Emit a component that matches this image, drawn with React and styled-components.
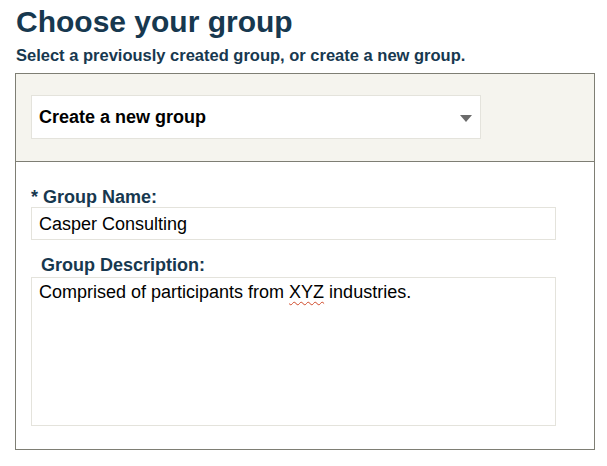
import React from "react";
import styled, { createGlobalStyle } from "styled-components";

const GlobalStyle = createGlobalStyle`
  body {
    margin: 0;
    background: #fff;
    font-family: "Liberation Sans", Arial, sans-serif;
  }
`;

const Page = styled.div`
  padding: 4px 0 0 15px;
  width: 580px;
`;

const Title = styled.h1`
  margin: 0 0 0 1px;
  font-size: 30px;
  line-height: 36px;
  font-weight: bold;
  color: #17384f;
`;

const Subtitle = styled.p`
  margin: 5px 0 8px 1px;
  font-size: 16.5px;
  line-height: 20px;
  font-weight: bold;
  color: #17384f;
`;

const Panel = styled.div`
  border: 1px solid #7e7e74;
  box-sizing: border-box;
  width: 580px;
`;

const PanelHead = styled.div`
  background: #f5f4ee;
  border-bottom: 1px solid #7e7e74;
  padding: 21px 15px 22px;
`;

const SelectBox = styled.div`
  display: flex;
  align-items: center;
  justify-content: space-between;
  box-sizing: border-box;
  width: 450px;
  height: 44px;
  background: #fff;
  border: 1px solid #e4e3dc;
  padding: 0 8px 0 7px;
  font-size: 18px;
  font-weight: bold;
  color: #000;
`;

const Arrow = styled.span`
  width: 0;
  height: 0;
  border-left: 6px solid transparent;
  border-right: 6px solid transparent;
  border-top: 7px solid #6b6b6b;
  margin-top: 2px;
`;

const PanelBody = styled.div`
  padding: 25px 15px 23px;
`;

const Label = styled.div`
  font-size: 18px;
  line-height: 20px;
  font-weight: bold;
  color: #17384f;
  margin-left: ${({ indent }) => indent || 0}px;
  margin-bottom: ${({ gap }) => gap || 0}px;
`;

const Field = styled.div`
  box-sizing: border-box;
  width: 525px;
  height: ${({ tall }) => (tall ? 149 : 33)}px;
  border: 1px solid #e4e3dc;
  padding: ${({ tall }) => (tall ? "4px 7px" : "0 7px")};
  display: flex;
  align-items: ${({ tall }) => (tall ? "flex-start" : "center")};
  font-size: 18px;
  line-height: 20px;
  color: #000;
  margin-bottom: ${({ gap }) => gap || 0}px;
`;

const Misspelled = styled.span`
  text-decoration: underline wavy #d04a2a;
  text-decoration-thickness: 1px;
  text-underline-offset: 3px;
`;

export default function App() {
  return (
    <>
      <GlobalStyle />
      <Page>
        <Title>Choose your group</Title>
        <Subtitle>Select a previously created group, or create a new group.</Subtitle>
        <Panel>
          <PanelHead>
            <SelectBox>
              Create a new group
              <Arrow />
            </SelectBox>
          </PanelHead>
          <PanelBody>
            <Label>* Group Name:</Label>
            <Field gap={15}>Casper Consulting</Field>
            <Label indent={10} gap={2}>Group Description:</Label>
            <Field tall>
              <span>
                Comprised of participants from <Misspelled>XYZ</Misspelled> industries.
              </span>
            </Field>
          </PanelBody>
        </Panel>
      </Page>
    </>
  );
}
